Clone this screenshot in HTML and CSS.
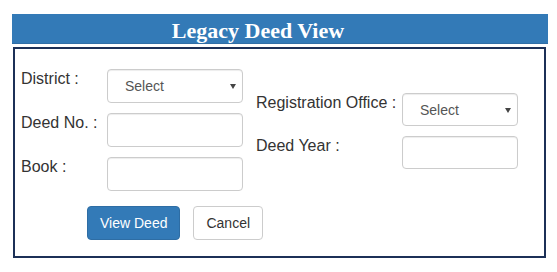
FILE: index.html
```html
<!DOCTYPE html>
<html>
<head>
<meta charset="utf-8">
<link rel="stylesheet" href="styles.css">
</head>
<body>
<div class="page">
  <div class="title-bar">Legacy Deed View</div>
  <div class="box">
    <div class="cols">
      <div class="col col-left">
        <label class="lbl">District :</label>
        <div class="sel-wrap"><select class="field sel"><option>Select</option></select></div>
        <label class="lbl">Deed No. :</label>
        <input class="field inp" type="text">
        <label class="lbl">Book :</label>
        <input class="field inp" type="text">
      </div>
      <div class="col col-right">
        <label class="lbl">Registration Office :</label>
        <div class="sel-wrap"><select class="field sel sel-sm"><option>Select</option></select></div>
        <label class="lbl">Deed Year :</label>
        <input class="field inp inp-sm" type="text">
      </div>
    </div>
    <div class="actions">
      <button class="btn btn-primary">View Deed</button>
      <button class="btn btn-default">Cancel</button>
    </div>
  </div>
</div>
</body>
</html>
```
FILE: styles.css
```css
html, body {
  margin: 0;
  padding: 0;
  background: #ffffff;
}
.page {
  padding: 14px 0 0 12px;
  font-family: "Liberation Sans", Arial, sans-serif;
}
.title-bar {
  width: 536px;
  height: 29px;
  border-bottom: 1px solid #2f6ea6;
  background: #337ab7;
  color: #ffffff;
  font-family: "Liberation Serif", "Times New Roman", serif;
  font-weight: bold;
  font-size: 22px;
  line-height: 34px;
  text-align: center;
  padding-right: 44px;
  box-sizing: content-box;
  width: 492px;
}
.box {
  margin: 3px 0 0 1px;
  width: 533px;
  box-sizing: border-box;
  border: 2px solid #1c3057;
  padding: 20px 6px 16px;
}
.cols {
  display: flex;
  gap: 13px;
  align-items: flex-start;
}
.col {
  display: grid;
  row-gap: 10px;
  align-items: start;
}
.col-left {
  grid-template-columns: 86px 136px;
}
.col-right {
  grid-template-columns: 146px 116px;
  margin-top: 24px;
}
.lbl {
  font-size: 16px;
  line-height: 20px;
  color: #333333;
}
.field {
  display: block;
  box-sizing: border-box;
  border: 1px solid #cccccc;
  border-radius: 4px;
  background: #ffffff;
  box-shadow: inset 0 1px 1px rgba(0, 0, 0, 0.075);
  font-family: "Liberation Sans", Arial, sans-serif;
  font-size: 14px;
  color: #555555;
  margin: 0;
}
.inp {
  width: 136px;
  height: 34px;
  padding: 6px 12px;
}
.inp-sm {
  width: 116px;
  height: 33px;
}
.sel-wrap {
  position: relative;
}
.sel-wrap::after {
  content: "";
  position: absolute;
  right: 7px;
  top: 50%;
  margin-top: -2px;
  border-left: 3px solid transparent;
  border-right: 3px solid transparent;
  border-top: 5px solid #444444;
  pointer-events: none;
}
.sel {
  appearance: none;
  -webkit-appearance: none;
  width: 136px;
  height: 34px;
  padding: 0 0 0 17px;
}
.sel-sm {
  width: 116px;
  height: 33px;
}
.actions {
  display: flex;
  gap: 13px;
  margin: 15px 0 0 66px;
}
.btn {
  font-family: "Liberation Sans", Arial, sans-serif;
  font-size: 14px;
  line-height: 20px;
  padding: 6px 12px;
  border: 1px solid transparent;
  border-radius: 4px;
  margin: 0;
}
.btn-primary {
  background: #337ab7;
  border-color: #2e6da4;
  color: #ffffff;
}
.btn-default {
  background: #ffffff;
  border-color: #cccccc;
  color: #333333;
}
```
